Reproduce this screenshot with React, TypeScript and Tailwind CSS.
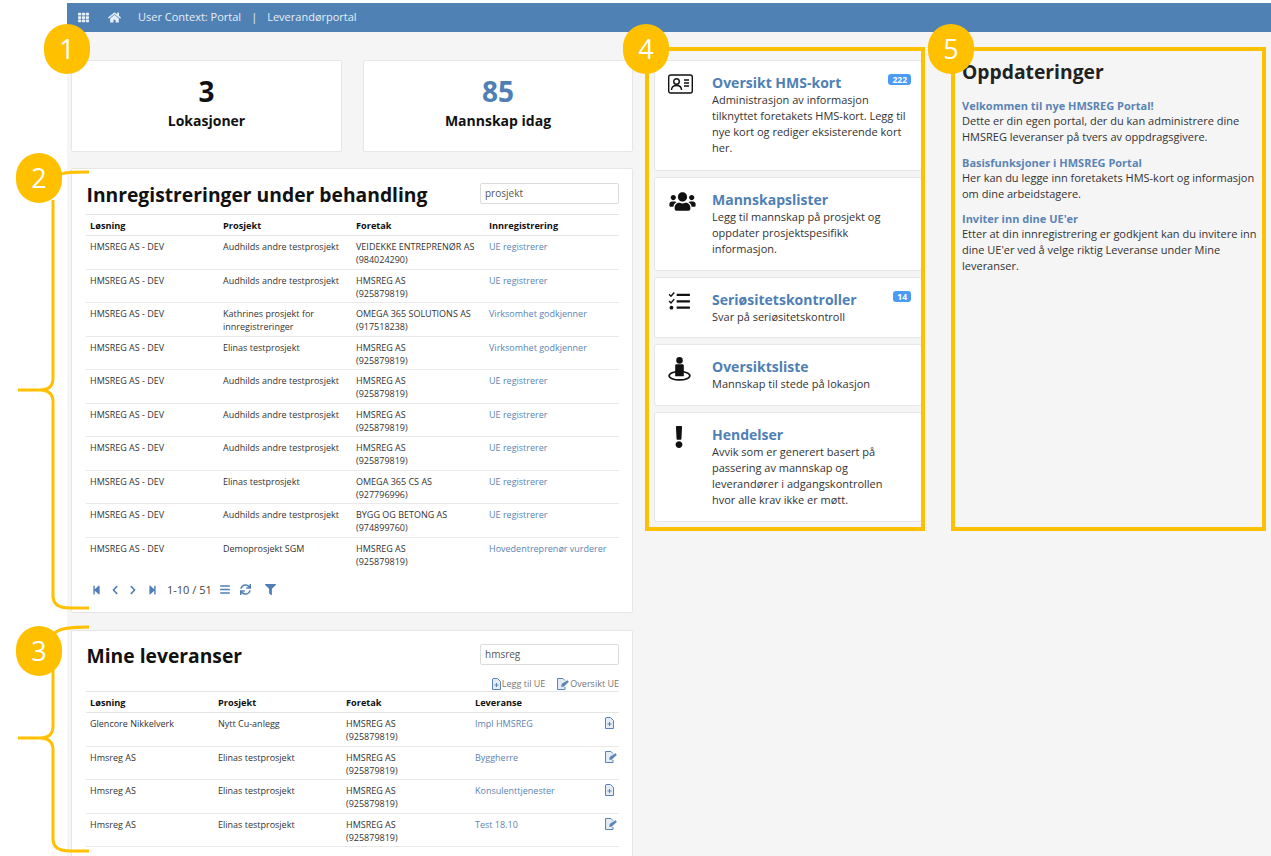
import { FaTh, FaHome, FaStepBackward, FaStepForward, FaChevronLeft, FaChevronRight, FaBars, FaSync, FaFilter, FaUsers, FaExclamation } from 'react-icons/fa';

const regRows = [
  ['HMSREG AS - DEV', 'Audhilds andre testprosjekt', 'VEIDEKKE ENTREPRENØR AS', '(984024290)', 'UE registrerer'],
  ['HMSREG AS - DEV', 'Audhilds andre testprosjekt', 'HMSREG AS', '(925879819)', 'UE registrerer'],
  ['HMSREG AS - DEV', 'Kathrines prosjekt for innregistreringer', 'OMEGA 365 SOLUTIONS AS', '(917518238)', 'Virksomhet godkjenner'],
  ['HMSREG AS - DEV', 'Elinas testprosjekt', 'HMSREG AS', '(925879819)', 'Virksomhet godkjenner'],
  ['HMSREG AS - DEV', 'Audhilds andre testprosjekt', 'HMSREG AS', '(925879819)', 'UE registrerer'],
  ['HMSREG AS - DEV', 'Audhilds andre testprosjekt', 'HMSREG AS', '(925879819)', 'UE registrerer'],
  ['HMSREG AS - DEV', 'Audhilds andre testprosjekt', 'HMSREG AS', '(925879819)', 'UE registrerer'],
  ['HMSREG AS - DEV', 'Elinas testprosjekt', 'OMEGA 365 CS AS', '(927796996)', 'UE registrerer'],
  ['HMSREG AS - DEV', 'Audhilds andre testprosjekt', 'BYGG OG BETONG AS', '(974899760)', 'UE registrerer'],
  ['HMSREG AS - DEV', 'Demoprosjekt SGM', 'HMSREG AS', '(925879819)', 'Hovedentreprenør vurderer'],
];

const deliveries = [
  ['Glencore Nikkelverk', 'Nytt Cu-anlegg', 'Impl HMSREG', 'add'],
  ['Hmsreg AS', 'Elinas testprosjekt', 'Byggherre', 'edit'],
  ['Hmsreg AS', 'Elinas testprosjekt', 'Konsulenttjenester', 'add'],
  ['Hmsreg AS', 'Elinas testprosjekt', 'Test 18.10', 'edit'],
];

function Circle({ n, className }: { n: number; className: string }) {
  return (
    <div className={`absolute flex h-[50px] w-[46px] items-center justify-center rounded-full bg-[#ffc000] text-[27px] text-white ${className}`}>
      {n}
    </div>
  );
}

function FileAdd() {
  return (
    <svg width="9" height="12" viewBox="0 0 9 12" fill="#e3ebf4" stroke="#5b84b4" strokeWidth="1">
      <path d="M1 .5H5.500L8.500 3.500V11.500H.5V1Z" />
      <path d="M2.500 7H6.500M4.500 5V9" fill="none" />
    </svg>
  );
}

function FileEdit() {
  return (
    <svg width="12" height="12" viewBox="0 0 12 12" fill="none" stroke="#5b84b4">
      <path d="M8 9V11.500H.5V.5H6L8 2.500" fill="#e3ebf4" strokeWidth="1" />
      <path d="M4.500 8.500L5 6L10.500 2.500L11.500 4L6.500 8.500Z" fill="#5b84b4" strokeWidth=".5" />
    </svg>
  );
}

function IdCard() {
  return (
    <svg width="25" height="20" viewBox="0 0 25 20" fill="none" stroke="#111" strokeWidth="1.400">
      <rect x=".7" y="1" width="23.600" height="18" rx="2" />
      <circle cx="8.500" cy="7.500" r="2.800" />
      <path d="M3.500 16c0-3 2-4.500 5-4.500s5 1.500 5 4.500" />
      <path d="M16 6h5M16 9h5M16 12h5" />
    </svg>
  );
}

function TaskList() {
  return (
    <svg className="mt-px" width="23" height="18" viewBox="0 0 24 19" fill="none" stroke="#111">
      <path d="M1 2.500l2 2 3.500-4M1 9.500l2 2 3.500-4" strokeWidth="1.500" />
      <circle cx="3.500" cy="16.500" r="2" fill="#111" stroke="none" />
      <path d="M9 3h14M9 10h14M9 16.500h14" strokeWidth="2.400" />
    </svg>
  );
}

function PersonRing() {
  return (
    <svg className="-mt-px" width="23" height="24" viewBox="0 0 24 25" fill="none">
      <circle cx="12" cy="3.500" r="3.400" fill="#111" />
      <path d="M7.500 9Q7.500 7.500 9 7.500H15Q16.500 7.500 16.500 9V20H7.500Z" fill="#111" />
      <ellipse cx="12" cy="19.500" rx="10.800" ry="4.400" stroke="#111" strokeWidth="1.800" />
    </svg>
  );
}

function MenuCard({ icon, title, text, badge, className }: { icon: React.ReactNode; title: string; text: string[]; badge?: string; className: string }) {
  return (
    <div className={`relative flex rounded-[3px] border border-[#e6e6e6] bg-white ${className}`}>
      <div className="w-[57px] shrink-0 pt-[13px] pl-[13px]">{icon}</div>
      <div className="pt-[12px]">
        <div className="text-[14px] leading-[19px] font-bold text-[#4f7fb4]">{title}</div>
        {text.map((t) => (
          <div key={t} className="text-[11px] leading-[16px] whitespace-nowrap text-[#333]">{t}</div>
        ))}
      </div>
      {badge && (
        <span className="absolute top-[13px] right-[10px] rounded-[3px] bg-[#4b9bf5] px-[4px] text-[8.500px] leading-[11px] font-bold text-white">{badge}</span>
      )}
    </div>
  );
}

function Update({ title, text }: { title: string; text: string[] }) {
  return (
    <div className="mb-[9.500px]">
      <div className="text-[11px] leading-[15px] font-bold text-[#5b84b4]">{title}</div>
      {text.map((t) => (
        <div key={t} className="text-[11px] leading-[16px] whitespace-nowrap text-[#333]">{t}</div>
      ))}
    </div>
  );
}

export default function App() {
  return (
    <div className="relative flex h-[856px] w-[1271px] overflow-hidden bg-white text-[#333] [font-family:'Open_Sans',sans-serif]">
      <div className="w-[67px] shrink-0" />
      <div className="flex-1 pt-[3px]">
        <div className="flex h-[29px] items-center bg-[#4f81b5] pl-[11px] text-[11px] text-[#e6eef6]">
          <FaTh className="h-[11px] w-[11px]" />
          <FaHome className="ml-[19px] h-[13px] w-[13px]" />
          <span className="ml-[17px]">User Context: Portal</span>
          <span className="ml-[10px]">|</span>
          <span className="ml-[10px]">Leverandørportal</span>
        </div>
        <div className="flex h-[824px] bg-[#f5f5f5] pt-[28px] pl-[4px]">
          <div className="flex w-[562px] shrink-0 flex-col">
            <div className="flex justify-between">
              <div className="flex h-[92px] w-[271px] flex-col items-center rounded-[2px] border border-[#e6e6e6] bg-white pt-[12px]">
                <div className="text-[28px] leading-[36px] font-bold text-[#111]">3</div>
                <div className="mt-[2px] text-[14px] leading-[20px] font-bold text-[#111]">Lokasjoner</div>
              </div>
              <div className="flex h-[92px] w-[270px] flex-col items-center rounded-[2px] border border-[#e6e6e6] bg-white pt-[12px]">
                <div className="text-[28px] leading-[36px] font-bold text-[#4f7fb4]">85</div>
                <div className="mt-[2px] text-[14px] leading-[20px] font-bold text-[#111]">Mannskap idag</div>
              </div>
            </div>

            <div className="mt-[16px] h-[445px] shrink-0 rounded-[2px] border border-[#e6e6e6] bg-white pt-[14px] pr-[13px] pl-[15px]">
              <div className="flex h-[31px] items-start justify-between">
                <h2 className="-mt-[2px] -ml-[0.5px] text-[19.300px] leading-[27px] font-bold text-[#111]">Innregistreringer under behandling</h2>
                <div className="flex h-[21px] w-[139px] items-center rounded-[2px] border border-[#dcdcdc] pl-[4px] text-[10px] text-[#555]">prosjekt</div>
              </div>
              <table className="-ml-px w-[533px] table-fixed border-t border-[#e4e4e4] text-[9px] leading-[13px]">
                <thead>
                  <tr className="h-[21px] border-b border-[#e4e4e4] text-left text-[9.200px] text-[#111]">
                    <th className="w-[133px] pl-[4px] font-bold">Løsning</th>
                    <th className="w-[133px] pl-[4px] font-bold">Prosjekt</th>
                    <th className="w-[133px] pl-[4px] font-bold">Foretak</th>
                    <th className="pl-[4px] font-bold">Innregistrering</th>
                  </tr>
                </thead>
                <tbody>
                  {regRows.map((r, i) => (
                    <tr key={i} className={`h-[33.500px] align-top ${i < 9 ? 'border-b border-[#e9e9e9]' : ''}`}>
                      <td className="pt-[4px] pl-[4px]">{r[0]}</td>
                      <td className="pt-[4px] pl-[4px]">{r[1]}</td>
                      <td className="pt-[4px] pl-[4px]">{r[2]}<br />{r[3]}</td>
                      <td className="pt-[4px] pl-[4px] text-[#5b84b4]">{r[4]}</td>
                    </tr>
                  ))}
                </tbody>
              </table>
              <div className="mt-[11px] flex items-center pl-[5px] text-[#4f7fb4]">
                <FaStepBackward className="h-[10px] w-[9px]" />
                <FaChevronLeft className="ml-[10px] h-[10px] w-[8px]" />
                <FaChevronRight className="ml-[10px] h-[10px] w-[8px]" />
                <FaStepForward className="ml-[11px] h-[10px] w-[9px]" />
                <span className="ml-[10px] text-[11px] text-[#444]">1-10 / 51</span>
                <FaBars className="ml-[8px] h-[11px] w-[10px]" />
                <FaSync className="ml-[10px] h-[11px] w-[11px]" />
                <FaFilter className="ml-[14px] h-[11px] w-[11px]" />
              </div>
            </div>

            <div className="mt-[17px] h-[300px] shrink-0 rounded-[2px] border border-[#e6e6e6] bg-white pt-[13px] pr-[13px] pl-[15px]">
              <div className="flex h-[33px] items-start justify-between">
                <h2 className="-mt-[2px] -ml-[0.5px] text-[19.300px] leading-[27px] font-bold text-[#111]">Mine leveranser</h2>
                <div className="flex h-[21px] w-[139px] items-center rounded-[2px] border border-[#dcdcdc] pl-[4px] text-[10px] text-[#555]">hmsreg</div>
              </div>
              <div className="flex h-[14px] items-center justify-end text-[9px] text-[#777]">
                <FileAdd />
                <span className="ml-[1px]">Legg til UE</span>
                <span className="ml-[12px]"><FileEdit /></span>
                <span className="ml-[1px]">Oversikt UE</span>
              </div>
              <table className="-ml-px w-[533px] table-fixed border-t border-[#e4e4e4] text-[9px] leading-[13px]">
                <thead>
                  <tr className="h-[21px] border-b border-[#e4e4e4] text-left text-[9.200px] text-[#111]">
                    <th className="w-[128px] pl-[4px] font-bold">Løsning</th>
                    <th className="w-[128px] pl-[4px] font-bold">Prosjekt</th>
                    <th className="w-[129px] pl-[4px] font-bold">Foretak</th>
                    <th className="pl-[4px] font-bold">Leveranse</th>
                    <th className="w-[30px]" />
                  </tr>
                </thead>
                <tbody>
                  {deliveries.map((r, i) => (
                    <tr key={i} className="h-[33.500px] border-b border-[#e9e9e9] align-top">
                      <td className="pt-[4px] pl-[4px]">{r[0]}</td>
                      <td className="pt-[4px] pl-[4px]">{r[1]}</td>
                      <td className="pt-[4px] pl-[4px]">HMSREG AS<br />(925879819)</td>
                      <td className="pt-[4px] pl-[4px] text-[#5b84b4]">{r[2]}</td>
                      <td className="pt-[4px] pl-[16px]">
                        {r[3] === 'add' ? <FileAdd /> : <FileEdit />}
                      </td>
                    </tr>
                  ))}
                </tbody>
              </table>
            </div>
          </div>

          <div className="ml-[21px] flex w-[268px] shrink-0 flex-col gap-[6px]">
            <MenuCard className="h-[110.500px]" icon={<IdCard />} title="Oversikt HMS-kort" badge="222" text={['Administrasjon av informasjon', 'tilknyttet foretakets HMS-kort. Legg til', 'nye kort og rediger eksisterende kort', 'her.']} />
            <MenuCard className="h-[94px]" icon={<FaUsers className="h-[21px] w-[29px] text-[#111]" />} title="Mannskapslister" text={['Legg til mannskap på prosjekt og', 'oppdater prosjektspesifikk', 'informasjon.']} />
            <MenuCard className="h-[61px]" icon={<TaskList />} title="Seriøsitetskontroller" badge="14" text={['Svar på seriøsitetskontroll']} />
            <MenuCard className="h-[62px]" icon={<PersonRing />} title="Oversiktsliste" text={['Mannskap til stede på lokasjon']} />
            <MenuCard className="h-[110px]" icon={<FaExclamation className="ml-[6px] h-[22px] w-[10px] text-[#111]" />} title="Hendelser" text={['Avvik som er generert basert på', 'passering av mannskap og', 'leverandører i adgangskontrollen', 'hvor alle krav ikke er møtt.']} />
          </div>

          <div className="ml-[40px] w-[300px]">
            <h2 className="mb-[14px] text-[19.300px] leading-[24px] font-bold text-[#222]">Oppdateringer</h2>
            <Update title="Velkommen til nye HMSREG Portal!" text={['Dette er din egen portal, der du kan administrere dine', 'HMSREG leveranser på tvers av oppdragsgivere.']} />
            <Update title="Basisfunksjoner i HMSREG Portal" text={['Her kan du legge inn foretakets HMS-kort og informasjon', 'om dine arbeidstagere.']} />
            <Update title="Inviter inn dine UE'er" text={['Etter at din innregistrering er godkjent kan du invitere inn', "dine UE'er ved å velge riktig Leveranse under Mine", 'leveranser.']} />
          </div>
        </div>
      </div>

      {/* annotations laid over the page */}
      <div className="absolute top-[47px] left-[645px] h-[484px] w-[280px] border-4 border-[#ffc000]" />
      <div className="absolute top-[47px] left-[951px] h-[484px] w-[315px] border-4 border-[#ffc000]" />
      <svg className="absolute top-0 left-0" width="100" height="856" fill="none" stroke="#ffc000" strokeWidth="3">
        <path d="M89 172C72 172 62 172 60 175M53 200V378Q53 390 40 390H18M40 390Q53 390 53 402V596Q53 608 70 608H89" />
        <path d="M89 627C72 627 58 628 54 634M53 670V726Q53 738 40 738H18M40 738Q53 738 53 750V839Q53 851 70 851H89" />
      </svg>
      <Circle n={1} className="top-[24px] left-[44px]" />
      <Circle n={2} className="top-[153px] left-[16px]" />
      <Circle n={3} className="top-[626px] left-[16px]" />
      <Circle n={4} className="top-[24px] left-[623px]" />
      <Circle n={5} className="top-[24px] left-[928px]" />
    </div>
  );
}
